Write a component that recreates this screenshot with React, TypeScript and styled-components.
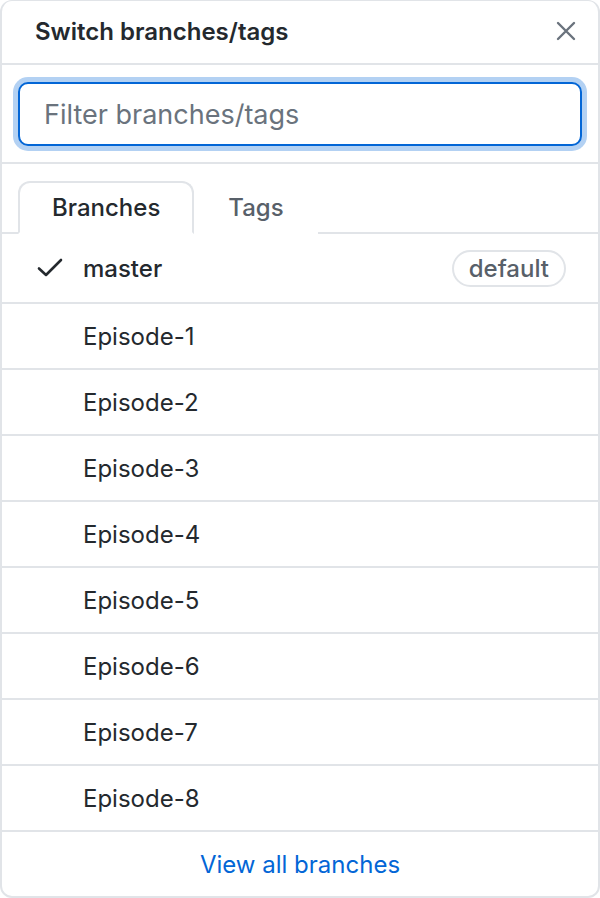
import styled, { createGlobalStyle } from 'styled-components';

const GlobalStyle = createGlobalStyle`
  html, body {
    margin: 0;
    padding: 0;
    background: #ffffff;
  }
  body {
    font-family: Inter, "Noto Sans", "Liberation Sans", sans-serif;
    color: #24292e;
  }
  * { box-sizing: border-box; }
`;

const Panel = styled.div`
  width: 600px;
  height: 898px;
  border: 2px solid #e1e4e8;
  border-top-width: 1px;
  border-radius: 12px;
  background: #fff;
  display: flex;
  flex-direction: column;
  overflow: hidden;
`;

const Header = styled.div`
  height: 64px;
  flex: none;
  display: flex;
  align-items: center;
  justify-content: space-between;
  padding: 0 20px 2px 33px;
  border-bottom: 2px solid #e1e4e8;
`;

const Title = styled.h1`
  margin: 0;
  font-size: 24px;
  font-weight: 600;
  color: #24292e;
`;

const CloseButton = styled.button`
  border: 0;
  background: none;
  padding: 0;
  width: 24px;
  height: 24px;
  display: flex;
  align-items: center;
  justify-content: center;
  color: #6a737d;
`;

const FilterArea = styled.div`
  flex: none;
  height: 99px;
  padding: 17px 16px 0 16px;
  border-bottom: 2px solid #e1e4e8;
`;

const FilterInput = styled.input`
  width: 100%;
  height: 64px;
  border: 2px solid #0366d6;
  border-radius: 10px;
  box-shadow: 0 0 0 5px rgba(3, 102, 214, 0.3);
  padding: 0 24px;
  font-family: inherit;
  font-size: 27px;
  color: #24292e;
  outline: none;
  &::placeholder {
    color: #6a737d;
  }
`;

const TabNav = styled.div`
  flex: none;
  height: 70px;
  display: flex;
  align-items: flex-end;
  padding: 0 16px;
  border-bottom: 2px solid #e1e4e8;
`;

const Tab = styled.div<{ $selected?: boolean }>`
  height: 53px;
  margin-bottom: -2px;
  padding: 0 32px;
  display: flex;
  align-items: center;
  font-size: 24px;
  font-weight: 500;
  color: ${p => (p.$selected ? '#24292e' : '#586069')};
  background: #fff;
  border: 2px solid ${p => (p.$selected ? '#e1e4e8' : 'transparent')};
  border-bottom-color: ${p => (p.$selected ? '#fff' : 'transparent')};
  border-radius: 12px 12px 0 0;
`;

const List = styled.div`
  flex: 1;
  display: flex;
  flex-direction: column;
`;

const Row = styled.div<{ $bold?: boolean }>`
  height: 66px;
  flex: none;
  display: flex;
  align-items: center;
  padding: 0 32px 0 35px;
  border-bottom: 2px solid #e1e4e8;
  font-size: 24px;
  font-weight: ${p => (p.$bold ? 500 : 400)};
  color: #24292e;
  &:first-child {
    height: 70px;
  }
`;

const CheckSlot = styled.span`
  width: 46px;
  flex: none;
  display: flex;
  align-items: center;
`;

const BranchName = styled.span`
  flex: 1;
`;

const Badge = styled.span`
  height: 37px;
  padding: 0 15px;
  display: flex;
  align-items: center;
  border: 2px solid #e1e4e8;
  border-radius: 999px;
  font-size: 24px;
  font-weight: 500;
  color: #586069;
`;

const Footer = styled.a`
  flex: none;
  height: 63px;
  display: flex;
  align-items: center;
  justify-content: center;
  font-size: 24px;
  color: #0366d6;
  text-decoration: none;
`;

const branches = ['Episode-1', 'Episode-2', 'Episode-3', 'Episode-4', 'Episode-5', 'Episode-6', 'Episode-7', 'Episode-8'];

export default function App() {
  return (
    <>
      <GlobalStyle />
      <Panel>
        <Header>
          <Title>Switch branches/tags</Title>
          <CloseButton aria-label="Close">
            <svg width="20" height="20" viewBox="0 0 20 20" fill="none" stroke="currentColor" strokeWidth="2.4" strokeLinecap="round">
              <path d="M2 2 L18 18 M18 2 L2 18" />
            </svg>
          </CloseButton>
        </Header>
        <FilterArea>
          <FilterInput placeholder="Filter branches/tags" />
        </FilterArea>
        <TabNav>
          <Tab $selected>Branches</Tab>
          <Tab>Tags</Tab>
        </TabNav>
        <List>
          <Row $bold>
            <CheckSlot>
              <svg width="26" height="20" viewBox="0 0 26 20" fill="none" stroke="#24292e" strokeWidth="2.6" strokeLinecap="round" strokeLinejoin="round">
                <path d="M2 10.5 L9 17 L24 2" />
              </svg>
            </CheckSlot>
            <BranchName>master</BranchName>
            <Badge>default</Badge>
          </Row>
          {branches.map(b => (
            <Row key={b}>
              <CheckSlot />
              <BranchName>{b}</BranchName>
            </Row>
          ))}
        </List>
        <Footer href="#">View all branches</Footer>
      </Panel>
    </>
  );
}
